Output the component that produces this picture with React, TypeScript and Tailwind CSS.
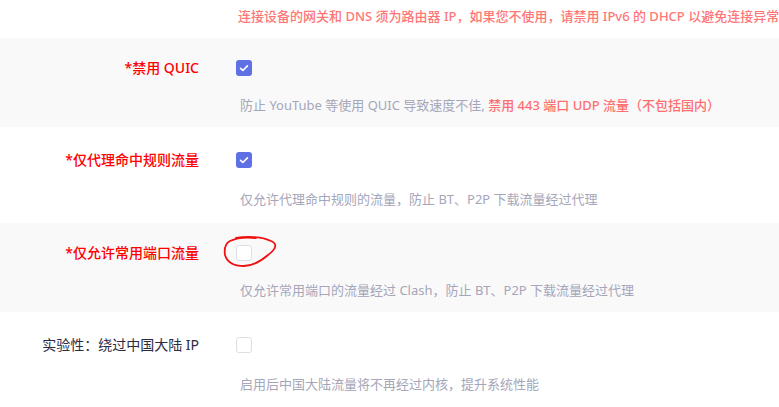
import React from "react";

type Row = {
  label: string;
  required: boolean;
  checked: boolean;
  desc: React.ReactNode;
  gray: boolean;
  annotated?: boolean;
};

const font = { fontFamily: '"Noto Sans", "Noto Sans CJK SC", sans-serif' };

function Checkbox({ checked }: { checked: boolean }) {
  if (checked) {
    return (
      <span className="flex h-4 w-4 items-center justify-center rounded-[3px] bg-[#5f6fe4]">
        <svg viewBox="0 0 16 16" className="h-[10px] w-[10px]">
          <path d="M2.5 8.5 L6.2 12 L13.5 4.5" fill="none" stroke="#fff" strokeWidth="2.6" strokeLinecap="round" strokeLinejoin="round" />
        </svg>
      </span>
    );
  }
  return <span className="block h-4 w-4 rounded-[3px] border border-[#dcdfe6] bg-white" />;
}

function Annotation() {
  return (
    <svg className="pointer-events-none absolute left-[-14px] top-[-10px] h-[36px] w-[58px]" viewBox="0 0 58 36" fill="none">
      <path
        d="M14 3 C26 1 40 2 49 6 C56 9 54 14 46 20 C39 26 30 31 22 31 C12 31 5 27 3 20 C2 13 4 8 8 6 C14 3 24 2 34 3"
        stroke="#f01010"
        strokeWidth="1.8"
        strokeLinecap="round"
      />
    </svg>
  );
}

const rows: Row[] = [
  {
    label: "禁用 QUIC",
    required: true,
    checked: true,
    gray: true,
    desc: (
      <>
        防止 YouTube 等使用 QUIC 导致速度不佳,{" "}
        <span className="font-medium text-[#ff6f6f]">禁用 443 端口 UDP 流量（不包括国内）</span>
      </>
    ),
  },
  {
    label: "仅代理命中规则流量",
    required: true,
    checked: true,
    gray: false,
    desc: "仅允许代理命中规则的流量，防止 BT、P2P 下载流量经过代理",
  },
  {
    label: "仅允许常用端口流量",
    required: true,
    checked: false,
    gray: true,
    annotated: true,
    desc: "仅允许常用端口的流量经过 Clash，防止 BT、P2P 下载流量经过代理",
  },
  {
    label: "实验性：绕过中国大陆 IP",
    required: false,
    checked: false,
    gray: false,
    desc: "启用后中国大陆流量将不再经过内核，提升系统性能",
  },
];

export default function App() {
  return (
    <div className="h-[407px] w-[779px] overflow-hidden bg-white" style={font}>
      <div className="h-[38px] whitespace-nowrap pl-[238px] pt-[6px] text-[13px] font-medium leading-[20px] text-[#ff7676]">
        连接设备的网关和 DNS 须为路由器 IP，如果您不使用，请禁用 IPv6 的 DHCP 以避免连接异常
      </div>

      {rows.map((row) => (
        <div
          key={row.label}
          className={row.gray ? "h-[89px] bg-[#f9f9fa] pt-[22px]" : "h-[96px] bg-white pt-[25px]"}
        >
          <div className="flex h-4 items-center">
            <div
              className={
                row.required
                  ? "w-[200px] pr-px text-right text-[14px] font-medium leading-[20px] text-[#ff0000]"
                  : "w-[200px] pr-px text-right text-[14px] leading-[20px] text-[#2d2b3f]"
              }
            >
              {row.required ? "*" : ""}
              {row.label}
            </div>
            <div className="relative ml-[36px]">
              <Checkbox checked={row.checked} />
              {row.annotated ? <Annotation /> : null}
            </div>
          </div>
          <div
            className={
              (row.gray ? "mt-[19px]" : "mt-[21px]") +
              " whitespace-nowrap pl-[240px] text-[13px] leading-[20px] text-[#a6a6b9]"
            }
          >
            {row.desc}
          </div>
        </div>
      ))}
    </div>
  );
}
